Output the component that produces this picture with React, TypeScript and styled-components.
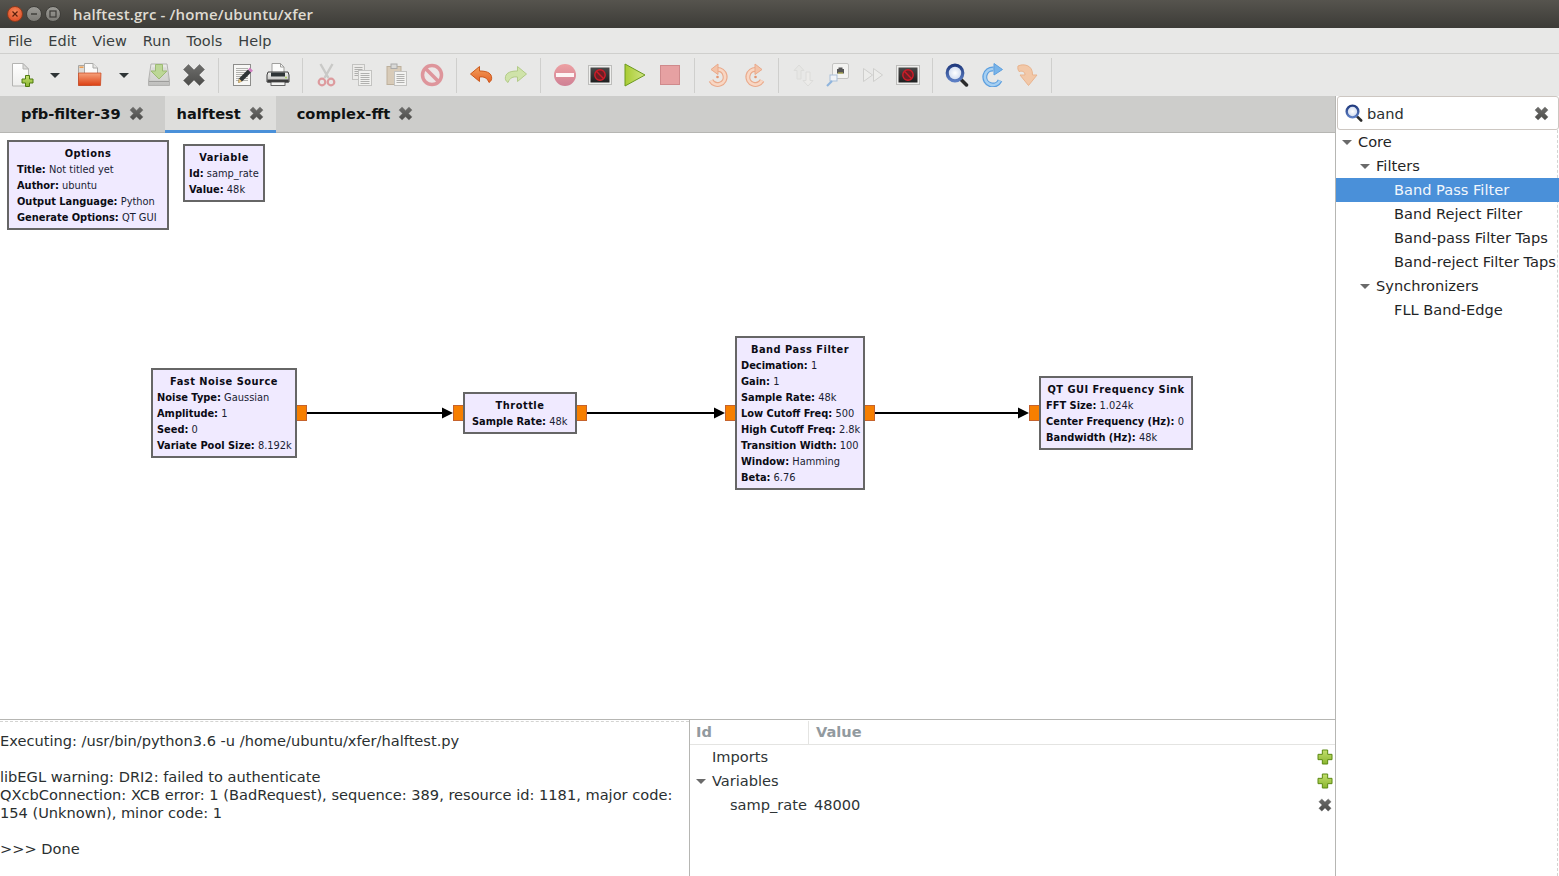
import React from "react";
import styled, { createGlobalStyle } from "styled-components";

const Global = createGlobalStyle`
  html, body { margin: 0; padding: 0; height: 100%; overflow: hidden; background: #fff; }
  * { box-sizing: border-box; }
`;

const FONT = `"DejaVu Sans", "Liberation Sans", sans-serif`;

const Window = styled.div`
  width: 1559px; height: 876px; display: flex; flex-direction: column;
  font-family: ${FONT}; font-size: 14.6px; color: #2e3436; background: #e8e8e7; overflow: hidden;
`;
const TitleBar = styled.div`
  height: 28px; flex: none; display: flex; align-items: center; padding-left: 7px;
  background: linear-gradient(#56544e, #3c3b37); color: #dfdbd2;
`;
const WinButton = styled.span<{ $close?: boolean }>`
  width: 16px; height: 16px; margin-right: 3px; border-radius: 50%; display: flex; align-items: center; justify-content: center;
  background: ${(p) => (p.$close ? "radial-gradient(circle at 50% 35%, #f6885a, #d9421c)" : "linear-gradient(#9b9a95, #7c7b76)")};
  border: 1px solid ${(p) => (p.$close ? "#8e3a1c" : "#3f3e3a")};
`;
const TitleText = styled.span`
  margin-left: 9px; font-family: "Open Sans", ${FONT}; font-weight: 600; font-size: 15px; letter-spacing: 0.13px; white-space: nowrap;
`;
const MenuBar = styled.div`
  height: 26px; flex: none; display: flex; border-bottom: 1px solid #cfcfcd; padding-top: 1px; padding-bottom: 1px;
`;
const MenuItem = styled.span`
  padding: 0 8px; line-height: 24px; color: #3a3f40; font-size: 14.5px;
`;
const Toolbar = styled.div`
  height: 42px; flex: none; display: flex; align-items: center; padding-left: 4px;
`;
const ToolButton = styled.div<{ $w?: number; $pr?: number }>`
  width: ${(p) => p.$w ?? 35}px; height: 42px; flex: none; display: flex; align-items: center; justify-content: center;
  padding-right: ${(p) => p.$pr ?? 0}px;
  svg { display: block; flex: none; }
`;
const ToolSep = styled.div`
  width: 14px; height: 35px; flex: none; position: relative; display: flex; justify-content: center;
  &::before { content: ""; width: 1px; height: 100%; background: #cfcfcd; }
`;
const Body = styled.div`
  flex: 1; min-height: 0; display: flex;
`;
const Main = styled.div`
  flex: 1; min-width: 0; display: flex; flex-direction: column; border-right: 1px solid #b6b6b3;
`;
const TabBar = styled.div`
  height: 37px; flex: none; display: flex; background: #cdcdcb; border-bottom: 1px solid #b6b6b3;
`;
const Tab = styled.div<{ $active?: boolean }>`
  height: 37px; display: flex; align-items: center; font-weight: 700; color: #101314;
  padding: ${(p) => (p.$active ? "0 12px 0 12px" : "0 21px 3px 21px")};
  background: ${(p) => (p.$active ? "#dededc" : "transparent")};
  border-bottom: ${(p) => (p.$active ? "3px solid #4a90d9" : "none")};
  gap: 8px;
  svg { display: block; }
`;
const Canvas = styled.div`
  flex: 1; min-height: 0; position: relative; background: #fff;
`;
const Wires = styled.svg`
  position: absolute; inset: 0; width: 100%; height: 100%;
`;
const Block = styled.div<{ $x: number; $y: number; $w: number; $h: number; $pad: number }>`
  position: absolute; left: ${(p) => p.$x}px; top: ${(p) => p.$y}px; width: ${(p) => p.$w}px; height: ${(p) => p.$h}px;
  background: #f0eaff; border: 2px solid #666; padding: 4px 0 0 ${(p) => p.$pad}px;
  font-size: 9.85px; line-height: 16px; color: #1a1d33; white-space: nowrap;
`;
const BlockTitle = styled.div<{ $pad: number }>`
  font-weight: 700; text-align: center; margin-left: -${(p) => p.$pad}px; color: #0b0b14; letter-spacing: 0.5px;
`;
const BlockKey = styled.b`
  font-weight: 700; color: #0b0b14;
`;
const Port = styled.div<{ $x: number }>`
  position: absolute; left: ${(p) => p.$x}px; top: 272px; width: 11px; height: 16px;
  background: #f77f00; border: 1px solid #c5632d;
`;
const Bottom = styled.div`
  height: 157px; flex: none; display: flex; background: #fff; border-top: 1px solid #b6b6b3;
`;
const Console = styled.div`
  width: 690px; flex: none; border-right: 1px solid #b6b6b3; position: relative; padding-top: 12px;
  line-height: 18px; color: #2a2f30; white-space: pre-wrap;
  &::before { content: ""; position: absolute; left: 0; right: 0; top: 1px; border-top: 1px dashed #d4d4d2; }
`;
const VarTable = styled.div`
  flex: 1; min-width: 0; display: flex; flex-direction: column; padding-top: 1px;
`;
const VarHead = styled.div`
  height: 24px; display: flex; border-bottom: 1px solid #e4e4e2; font-weight: 700; color: #929a9f; line-height: 22px;
`;
const VarIdHead = styled.div`
  width: 119px; padding-left: 6px; border-right: 1px solid #e4e4e2;
`;
const VarValHead = styled.div`
  padding-left: 7px;
`;
const VarRow = styled.div<{ $indent: number }>`
  height: 24px; display: flex; align-items: center; padding-left: ${(p) => p.$indent}px; position: relative; padding-right: 2px; line-height: 24px;
`;
const VarId = styled.span`
  margin-right: 7px;
`;
const RowEnd = styled.span<{ $x?: boolean }>`
  margin-left: auto; display: flex; margin-right: ${(p) => (p.$x ? 1 : 0)}px;
`;
const Caret = styled.span<{ $x: number }>`
  position: absolute; left: ${(p) => p.$x}px; top: 10px; width: 0; height: 0;
  border-left: 5px solid transparent; border-right: 5px solid transparent; border-top: 5px solid #6a6a6a;
`;
const Side = styled.div`
  width: 223px; flex: none; display: flex; flex-direction: column; background: #fff;
`;
const SearchBox = styled.div`
  height: 34px; flex: none; display: flex; align-items: center; margin-left: 1px; border: 1px solid #cdc7c2; border-radius: 3px; background: #fff; padding: 0 9px 0 7px; color: #2a2f30;
`;
const SearchText = styled.span`
  margin-left: 4px; flex: 1;
`;
const Tree = styled.div`
  flex: 1; border-right: 1px dashed #d4d4d2; margin-right: 1px;
`;
const TreeRow = styled.div<{ $indent: number; $sel?: boolean }>`
  height: 24px; line-height: 24px; padding-left: ${(p) => p.$indent}px; position: relative; white-space: nowrap; overflow: visible;
  margin-right: -2px; color: ${(p) => (p.$sel ? "#f2f7fc" : "#1f2526")};
  background: ${(p) => (p.$sel ? "#4a90d9" : "transparent")};
`;
const Defs = styled.svg`
  position: absolute; width: 0; height: 0;
`;

const Ico: React.FC<{ s?: number; children: React.ReactNode }> = ({ s = 24, children }) => (
  <svg width={s} height={s} viewBox="0 0 24 24" fill="none">{children}</svg>
);

const XGlyph = ({ s = 24 }: { s?: number }) => (
  <Ico s={s}>
    <path d="M6.500 1.500 12 7l5.500-5.500 5 5L17 12l5.500 5.500-5 5L12 17l-5.500 5.500-5-5L7 12 1.500 6.500z" fill="url(#gX)" stroke="#7a7a78" strokeWidth=".8" strokeLinejoin="round" />
  </Ico>
);
const PlusGlyph = ({ s = 16 }: { s?: number }) => (
  <Ico s={s}>
    <path d="M8 1.500h8V8h6.500v8H16v6.500H8V16H1.500V8H8z" fill="url(#gPlus)" stroke="#5d8a14" strokeWidth="1.500" />
  </Ico>
);
const Magnifier = ({ s = 24 }: { s?: number }) => (
  <Ico s={s}>
    <path d="m15 15.500 6.500 6.500" stroke="#2b2b2b" strokeWidth="3.500" strokeLinecap="round" />
    <circle cx="10" cy="10" r="7.800" fill="url(#gGlass)" stroke="url(#gRing)" strokeWidth="3.200" />
  </Ico>
);
const NoSign = ({ cx, cy, r }: { cx: number; cy: number; r: number }) => (
  <g stroke="#d01c28" strokeWidth="1.400" fill="#6b1f25">
    <circle cx={cx} cy={cy} r={r} />
    <path d={`M${cx - r * 0.7} ${cy - r * 0.7}L${cx + r * 0.7} ${cy + r * 0.7}`} />
  </g>
);
const Monitor = () => (
  <Ico>
    <rect x=".5" y="2.500" width="23" height="19" fill="#efefed" stroke="#bdbdbb" />
    <rect x="2.500" y="4.500" width="19" height="15" fill="url(#gScreen)" />
    <NoSign cx={12} cy={12} r={5.200} />
  </Ico>
);
const DocLines = ({ x, y, w, n, step = 2 }: { x: number; y: number; w: number; n: number; step?: number }) => (
  <g stroke="#a8a8a6" strokeWidth=".9">
    {Array.from({ length: n }).map((_, i) => (
      <path key={i} d={`M${x} ${y + i * step + 0.5}h${w}`} />
    ))}
  </g>
);

const ICONS: Record<string, React.ReactNode> = {
  new: (
    <Ico>
      <path d="M2.500.5H13l5.500 5.500v17H2.500z" fill="url(#gPaper)" stroke="#b4b4b2" />
      <path d="M13 .5V6h5.500z" fill="#dcdcda" stroke="#b4b4b2" />
      <path d="M15.500 12.500h4v3.500h3.500v4h-3.500v3.500h-4V20H12v-4h3.500z" fill="url(#gPlus)" stroke="#4f7a10" />
    </Ico>
  ),
  open: (
    <Ico>
      <path d="M.5 2.500h7l1 2h5v18H.5z" fill="#dedcd8" stroke="#a9a7a2" />
      <path d="M1.500 3.500h4v1.500h-4z" fill="#ee9d4f" />
      <path d="M6.500 .5H15l4.500 4.500V14h-13z" fill="#fbfbfa" stroke="#a9a9a7" />
      <path d="M15 .5V5h4.500" stroke="#a9a9a7" fill="#e6e6e4" />
      <path d="M.5 10H23l-.5 12.500h-22z" fill="url(#gFolder)" stroke="#c9421a" strokeWidth=".7" />
    </Ico>
  ),
  save: (
    <Ico>
      <path d="M4 1h16l2.500 17v4.500h-21V18z" fill="url(#gDrive)" stroke="#b3b3b1" />
      <path d="M2 18.500h20" stroke="#9d9d9b" />
      <path d="M5 4.500h14l2 13H3z" fill="#d9d9d6" opacity=".7" />
      <path d="M8.500 1.500h7V8H20l-8 8-8-8h4.500z" fill="#bcd796" stroke="#9cba73" />
    </Ico>
  ),
  close: <XGlyph />,
  edit: (
    <Ico>
      <rect x="2.500" y="1.500" width="17" height="21" fill="#f7f7f5" stroke="#8d8d8b" />
      <DocLines x={5} y={5} w={12} n={7} />
      <path d="m7 20 1-4.500L17 6.500l3 3-9 9z" fill="#2e3436" />
      <path d="m17 6.500 1.800-2 3.200 3.200-2 1.800z" fill="#cf7fc0" />
      <path d="m7 20 1-4.500 3 3z" fill="#e7c27a" />
    </Ico>
  ),
  print: (
    <Ico>
      <path d="M6 .5h8.500L18 4v7H6z" fill="#fbfbfa" stroke="#9f9f9d" />
      <path d="M14.500 .5V4H18" stroke="#9f9f9d" />
      <path d="M2 9h20l1 3v7H1v-7z" fill="url(#gPrinter)" stroke="#3f3f3f" />
      <rect x="5" y="9.500" width="14" height="4" fill="#2e3436" />
      <rect x="1.500" y="16.500" width="21" height="3" fill="#3a3a3a" />
      <rect x="5" y="19" width="14" height="3.500" fill="#f5f5f3" stroke="#444" strokeWidth=".8" />
      <circle cx="20" cy="14.500" r=".9" fill="#a5cf4d" />
    </Ico>
  ),
  cut: (
    <Ico>
      <path d="M5.500 1 13.500 15M17.500 1 9.500 15" stroke="#c9c9c7" strokeWidth="2.400" />
      <circle cx="7" cy="19" r="3.300" stroke="#dd9b9e" strokeWidth="2.200" />
      <circle cx="16" cy="19" r="3.300" stroke="#dd9b9e" strokeWidth="2.200" />
    </Ico>
  ),
  copy: (
    <Ico>
      <rect x="2.500" y="1.500" width="12" height="15" fill="#ecebe9" stroke="#c3c3c1" />
      <DocLines x={4.500} y={4} w={8} n={5} />
      <rect x="8.500" y="7.500" width="13" height="15" fill="#f1f1ef" stroke="#c3c3c1" />
      <DocLines x={10.500} y={10} w={9} n={6} />
    </Ico>
  ),
  paste: (
    <Ico>
      <rect x="2" y="3.500" width="14" height="18" fill="#d8cbb8" stroke="#bdb09c" />
      <rect x="6" y="1" width="6" height="4.500" fill="#d9d9d7" stroke="#aaa" />
      <rect x="9.500" y="8.500" width="12" height="14" fill="#f3f3f1" stroke="#c3c3c1" />
      <DocLines x={11.500} y={11} w={8} n={5} />
    </Ico>
  ),
  del: (
    <Ico>
      <circle cx="12" cy="12" r="9.500" fill="#ece6e6" stroke="#de959b" strokeWidth="3.500" />
      <path d="m5.500 5.500 13 13" stroke="#de959b" strokeWidth="3.500" />
    </Ico>
  ),
  undo: (
    <Ico>
      <path d="M10.500 3.500 1.500 11l9 7.500v-4.500c4.500-.5 7.500.5 9.500 5.500 2.500-1.500 3-3.500 2.500-6-1-4-5.500-5.500-12-5.500z" fill="url(#gOrange)" stroke="#cc5a1e" />
    </Ico>
  ),
  redo: (
    <Ico>
      <path d="M13.500 3.500 22.500 11l-9 7.500v-4.500c-4.500-.5-7.500.5-9.500 5.500-2.500-1.500-3-3.500-2.500-6 1-4 5.500-5.500 12-5.500z" fill="#cfe3a9" stroke="#b3cb88" />
    </Ico>
  ),
  minus: (
    <Ico>
      <circle cx="12" cy="12" r="11" fill="url(#gPink)" />
      <rect x="3" y="10" width="18" height="4" fill="#fdf4f4" />
    </Ico>
  ),
  mon: <Monitor />,
  play: (
    <Ico>
      <path d="M2 1v22l20-11z" fill="url(#gPlay)" stroke="#6c9a1f" />
    </Ico>
  ),
  stop: (
    <Ico>
      <rect x="2.500" y="2.500" width="19" height="19" fill="#e6a1a2" stroke="#cf8a8c" />
    </Ico>
  ),
  rotL: (
    <Ico>
      <path d="M10 6.500a7.500 7.500 0 1 1-6 11" stroke="#eaa98a" strokeWidth="5" />
      <path d="M10 6.500a7.500 7.500 0 1 1-6 11" stroke="#f8d7c4" strokeWidth="2.800" />
      <path d="M11 1v10.500L4 6.500z" fill="#f3c3a8" stroke="#eaa98a" />
      <circle cx="10.500" cy="14" r="1.300" fill="#e4946f" />
    </Ico>
  ),
  rotR: (
    <Ico>
      <path d="M14 6.500a7.500 7.500 0 1 0 6 11" stroke="#eaa98a" strokeWidth="5" />
      <path d="M14 6.500a7.500 7.500 0 1 0 6 11" stroke="#f8d7c4" strokeWidth="2.800" />
      <path d="M13 1v10.500l7-5z" fill="#f3c3a8" stroke="#eaa98a" />
      <circle cx="13.500" cy="14" r="1.300" fill="#e4946f" />
    </Ico>
  ),
  updown: (
    <Ico>
      <path d="M8 2 3 7.500h3V16h4V7.500h3z" fill="#e6e6e4" stroke="#dcdcda" />
      <path d="M17 23l5-5.500h-3V9h-4v8.500h-3z" fill="#ecebe9" stroke="#dcdcda" />
    </Ico>
  ),
  plug: (
    <Ico>
      <rect x="6.500" y=".5" width="16" height="15" rx="1.500" fill="#f3f3f1" stroke="#c4c4c2" />
      <path d="M11 6h1.500V4.500h4V6H18v4.500h-7z" fill="#555" />
      <path d="M12 10h5" stroke="#c8c44a" />
      <rect x="4" y="12" width="7" height="6" fill="#f0f3f7" stroke="#a9bfd9" />
      <path d="M6 18 1 23" stroke="#8fb4dd" strokeWidth="2.200" />
    </Ico>
  ),
  ff: (
    <Ico>
      <path d="M2.500 5.500v13l9-6.500zM12.500 5.500v13l9-6.500z" fill="#ececea" stroke="#cfcfcd" />
    </Ico>
  ),
  find: <Magnifier />,
  refresh: (
    <Ico>
      <path d="M20 17.500a8 8 0 1 1-6.500-11.500" stroke="#5c9fdf" strokeWidth="5" />
      <path d="M20 17.500a8 8 0 1 1-6.500-11.500" stroke="#a6cff1" strokeWidth="2.600" />
      <path d="M14 .5v11.500l8.500-5.500z" fill="#7ab4e8" stroke="#5c9fdf" />
    </Ico>
  ),
  curve: (
    <Ico>
      <path d="M3 3C8 .5 18 1.500 17.500 12H22l-8.500 10.500L5 12h5c0-3-2-4.500-6-3.500C3 7 2.500 5 3 3z" fill="#f2c8a8" stroke="#e9b48e" strokeLinejoin="round" />
    </Ico>
  ),
};

const Tool = ({ name, w, pr }: { name: string; w?: number; pr?: number }) => (
  <ToolButton $w={w} $pr={pr}>{ICONS[name]}</ToolButton>
);
const Arrow = ({ w, pr }: { w?: number; pr?: number }) => (
  <ToolButton $w={w} $pr={pr}>
    <svg width="10" height="5" viewBox="0 0 10 5"><path d="M0 0h10L5 5z" fill="#2e3436" /></svg>
  </ToolButton>
);

type NodeData = { x: number; y: number; w: number; h: number; pad: number; title: string; rows: [string, string][] };

const NODES: NodeData[] = [
  { x: 7, y: 7, w: 162, h: 90, pad: 8, title: "Options", rows: [["Title:", "Not titled yet"], ["Author:", "ubuntu"], ["Output Language:", "Python"], ["Generate Options:", "QT GUI"]] },
  { x: 183, y: 11, w: 82, h: 58, pad: 4, title: "Variable", rows: [["Id:", "samp_rate"], ["Value:", "48k"]] },
  { x: 151, y: 235, w: 146, h: 90, pad: 4, title: "Fast Noise Source", rows: [["Noise Type:", "Gaussian"], ["Amplitude:", "1"], ["Seed:", "0"], ["Variate Pool Size:", "8.192k"]] },
  { x: 463, y: 259, w: 114, h: 42, pad: 7, title: "Throttle", rows: [["Sample Rate:", "48k"]] },
  { x: 735, y: 203, w: 130, h: 154, pad: 4, title: "Band Pass Filter", rows: [["Decimation:", "1"], ["Gain:", "1"], ["Sample Rate:", "48k"], ["Low Cutoff Freq:", "500"], ["High Cutoff Freq:", "2.8k"], ["Transition Width:", "100"], ["Window:", "Hamming"], ["Beta:", "6.76"]] },
  { x: 1039, y: 243, w: 154, h: 74, pad: 5, title: "QT GUI Frequency Sink", rows: [["FFT Size:", "1.024k"], ["Center Frequency (Hz):", "0"], ["Bandwidth (Hz):", "48k"]] },
];
const PORTS = [296, 453, 576, 725, 864, 1029];
const WIRES = [[306, 453], [586, 725], [874, 1029]];

export default function App() {
  return (
    <Window>
      <Global />
      <Defs>
        <defs>
          <linearGradient id="gPlus" x1="0" y1="0" x2="0" y2="1"><stop offset="0" stopColor="#c3df6e" /><stop offset="1" stopColor="#8ab62f" /></linearGradient>
          <linearGradient id="gX" x1="0" y1="0" x2="0" y2="1"><stop offset="0" stopColor="#6e6e6c" /><stop offset="1" stopColor="#4c4c4a" /></linearGradient>
          <linearGradient id="gPaper" x1="0" y1="0" x2="0" y2="1"><stop offset="0" stopColor="#ffffff" /><stop offset="1" stopColor="#eeeeec" /></linearGradient>
          <linearGradient id="gFolder" x1="0" y1="0" x2="0" y2="1"><stop offset="0" stopColor="#f6a37c" /><stop offset="1" stopColor="#dc3f12" /></linearGradient>
          <linearGradient id="gDrive" x1="0" y1="0" x2="0" y2="1"><stop offset="0" stopColor="#ececea" /><stop offset="1" stopColor="#bdbdbb" /></linearGradient>
          <linearGradient id="gPrinter" x1="0" y1="0" x2="0" y2="1"><stop offset="0" stopColor="#f4f4f2" /><stop offset="1" stopColor="#b9b9b7" /></linearGradient>
          <linearGradient id="gOrange" x1="0" y1="0" x2="0" y2="1"><stop offset="0" stopColor="#f3a05a" /><stop offset="1" stopColor="#e4632a" /></linearGradient>
          <linearGradient id="gPink" x1="0" y1="0" x2="0" y2="1"><stop offset="0" stopColor="#eda0a2" /><stop offset="1" stopColor="#cf8094" /></linearGradient>
          <linearGradient id="gPlay" x1="0" y1="0" x2="1" y2="0"><stop offset="0" stopColor="#a9cc32" /><stop offset="1" stopColor="#d0e482" /></linearGradient>
          <linearGradient id="gScreen" x1="0" y1="0" x2="0" y2="1"><stop offset="0" stopColor="#4a4a4a" /><stop offset="1" stopColor="#1f1f1f" /></linearGradient>
          <linearGradient id="gRing" x1="0" y1="0" x2="0" y2="1"><stop offset="0" stopColor="#203a7e" /><stop offset="1" stopColor="#5d7fc4" /></linearGradient>
          <radialGradient id="gGlass"><stop offset="0" stopColor="#ffffff" /><stop offset="1" stopColor="#c9d6ee" /></radialGradient>
        </defs>
      </Defs>
      <TitleBar>
        <WinButton $close>
          <svg width="8" height="8" viewBox="0 0 8 8"><path d="m1.500 1.500 5 5m0-5-5 5" stroke="#5a1f0c" strokeWidth="1.200" /></svg>
        </WinButton>
        <WinButton>
          <svg width="8" height="8" viewBox="0 0 8 8"><path d="M1 4h6" stroke="#3c3b37" strokeWidth="1.400" /></svg>
        </WinButton>
        <WinButton>
          <svg width="8" height="8" viewBox="0 0 8 8"><rect x="1" y="1" width="6" height="6" fill="none" stroke="#3c3b37" strokeWidth="1.200" /></svg>
        </WinButton>
        <TitleText>halftest.grc - /home/ubuntu/xfer</TitleText>
      </TitleBar>
      <MenuBar>
        {["File", "Edit", "View", "Run", "Tools", "Help"].map((m) => <MenuItem key={m}>{m}</MenuItem>)}
      </MenuBar>
      <Toolbar>
        <Tool name="new" w={36} />
        <Arrow w={30} />
        <Tool name="open" w={40} />
        <Arrow w={31.5} pr={3} />
        <Tool name="save" />
        <Tool name="close" />
        <ToolSep />
        <Tool name="edit" />
        <Tool name="print" />
        <ToolSep />
        <Tool name="cut" />
        <Tool name="copy" />
        <Tool name="paste" />
        <Tool name="del" />
        <ToolSep />
        <Tool name="undo" />
        <Tool name="redo" />
        <ToolSep />
        <Tool name="minus" />
        <Tool name="mon" />
        <Tool name="play" />
        <Tool name="stop" />
        <ToolSep />
        <Tool name="rotL" />
        <Tool name="rotR" />
        <ToolSep />
        <Tool name="updown" />
        <Tool name="plug" />
        <Tool name="ff" />
        <Tool name="mon" />
        <ToolSep />
        <Tool name="find" />
        <Tool name="refresh" />
        <Tool name="curve" />
        <ToolSep />
      </Toolbar>
      <Body>
        <Main>
          <TabBar>
            <Tab>pfb-filter-39<XGlyph s={15} /></Tab>
            <Tab $active>halftest<XGlyph s={15} /></Tab>
            <Tab>complex-fft<XGlyph s={15} /></Tab>
          </TabBar>
          <Canvas>
            <Wires>
              {WIRES.map(([a, b]) => (
                <g key={a}>
                  <path d={`M${a} 280H${b - 10}`} stroke="#000" strokeWidth="2" />
                  <path d={`M${b} 280l-11-5.500v11z`} fill="#000" />
                </g>
              ))}
            </Wires>
            {PORTS.map((x) => <Port key={x} $x={x} />)}
            {NODES.map((n) => (
              <Block key={n.title} $x={n.x} $y={n.y} $w={n.w} $h={n.h} $pad={n.pad}>
                <BlockTitle $pad={n.pad}>{n.title}</BlockTitle>
                {n.rows.map(([k, v]) => (
                  <div key={k}><BlockKey>{k}</BlockKey> {v}</div>
                ))}
              </Block>
            ))}
          </Canvas>
          <Bottom>
            <Console>{`Executing: /usr/bin/python3.6 -u /home/ubuntu/xfer/halftest.py

libEGL warning: DRI2: failed to authenticate
QXcbConnection: XCB error: 1 (BadRequest), sequence: 389, resource id: 1181, major code: 154 (Unknown), minor code: 1

>>> Done`}</Console>
            <VarTable>
              <VarHead>
                <VarIdHead>Id</VarIdHead>
                <VarValHead>Value</VarValHead>
              </VarHead>
              <VarRow $indent={22}>Imports<RowEnd><PlusGlyph /></RowEnd></VarRow>
              <VarRow $indent={22}><Caret $x={6} />Variables<RowEnd><PlusGlyph /></RowEnd></VarRow>
              <VarRow $indent={40}><VarId>samp_rate</VarId>48000<RowEnd $x><XGlyph s={14} /></RowEnd></VarRow>
            </VarTable>
          </Bottom>
        </Main>
        <Side>
          <SearchBox>
            <Magnifier s={18} />
            <SearchText>band</SearchText>
            <XGlyph s={15} />
          </SearchBox>
          <Tree>
            <TreeRow $indent={22}><Caret $x={6} />Core</TreeRow>
            <TreeRow $indent={40}><Caret $x={24} />Filters</TreeRow>
            <TreeRow $indent={58} $sel>Band Pass Filter</TreeRow>
            <TreeRow $indent={58}>Band Reject Filter</TreeRow>
            <TreeRow $indent={58}>Band-pass Filter Taps</TreeRow>
            <TreeRow $indent={58}>Band-reject Filter Taps</TreeRow>
            <TreeRow $indent={40}><Caret $x={24} />Synchronizers</TreeRow>
            <TreeRow $indent={58}>FLL Band-Edge</TreeRow>
          </Tree>
        </Side>
      </Body>
    </Window>
  );
}
